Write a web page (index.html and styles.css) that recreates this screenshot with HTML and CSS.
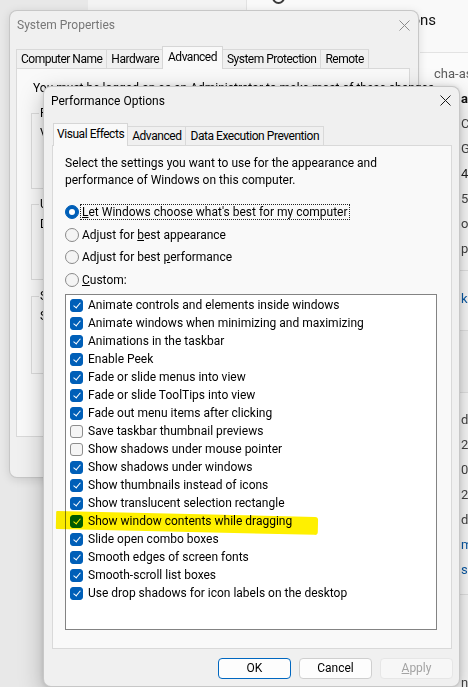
FILE: index.html
```html
<!DOCTYPE html>
<html lang="en">
<head>
<meta charset="utf-8">
<title>Performance Options</title>
<link rel="stylesheet" href="styles.css">
</head>
<body>
<div class="desktop">

  <!-- Settings app in the background -->
  <div class="settings">
    <div class="settings-rail"></div>
    <div class="settings-nav"></div>
    <div class="settings-main">
      <span class="search-ring"></span>
      <h1 class="settings-heading">Device specifications</h1>
      <div class="spec-card">
        <div class="spec-block top">
          <div class="spec-row device">cha-asus-laptop</div>
          <div class="spec-row"><b>about</b></div>
          <div class="spec-row">Copy</div>
          <div class="spec-row">GHz</div>
          <div class="spec-row dark">4 GB</div>
          <div class="spec-row">5A1F</div>
          <div class="spec-row">oint</div>
          <div class="spec-row">pen</div>
        </div>
        <div class="spec-block links">
          <div class="spec-row link">kg</div>
        </div>
        <div class="spec-block blank"></div>
        <div class="spec-block windows">
          <div class="spec-row">d</div>
          <div class="spec-row">22H2</div>
          <div class="spec-row">0/2023</div>
          <div class="spec-row">27</div>
          <div class="spec-row">d</div>
          <div class="spec-row link">m</div>
          <div class="spec-row link">se</div>
        </div>
        <div class="spec-block tail">
          <div class="spec-row">n</div>
        </div>
      </div>
    </div>
  </div>

  <!-- System Properties dialog -->
  <div class="window sysprops">
    <div class="titlebar">
      <span class="title">System Properties</span>
      <span class="close">
        <svg viewBox="0 0 11 11"><path d="M0.5 0.5 L10.5 10.5 M10.5 0.5 L0.5 10.5"/></svg>
      </span>
    </div>
    <div class="tabs">
      <span class="tab">Computer Name</span>
      <span class="tab">Hardware</span>
      <span class="tab active">Advanced</span>
      <span class="tab">System Protection</span>
      <span class="tab">Remote</span>
    </div>
    <div class="panel sp-panel">
      <p class="note">You must be logged on as an Administrator to make most of these changes.</p>
      <fieldset class="group g-perf">
        <legend>Performance</legend>
        <p>Visual effects, processor scheduling, memory usage, and virtual memory</p>
      </fieldset>
      <fieldset class="group g-profiles">
        <legend>User Profiles</legend>
        <p>Desktop settings related to your sign-in</p>
      </fieldset>
      <fieldset class="group g-startup">
        <legend>Startup and Recovery</legend>
        <p>System startup, system failure, and debugging information</p>
      </fieldset>
    </div>
  </div>

  <!-- Performance Options dialog -->
  <div class="window perf">
    <div class="titlebar">
      <span class="title">Performance Options</span>
      <span class="close">
        <svg viewBox="0 0 11 11"><path d="M0.5 0.5 L10.5 10.5 M10.5 0.5 L0.5 10.5"/></svg>
      </span>
    </div>
    <div class="tabs">
      <span class="tab active">Visual Effects</span>
      <span class="tab">Advanced</span>
      <span class="tab">Data Execution Prevention</span>
    </div>
    <div class="panel pf-panel">
      <p class="desc">Select the settings you want to use for the appearance and performance of Windows on this computer.</p>

      <div class="radios">
        <div class="radio-row"><span class="radio on"></span><span class="radio-label focus"><u>L</u>et Windows choose what's best for my computer</span></div>
        <div class="radio-row"><span class="radio"></span><span class="radio-label">Adjust for <u>b</u>est appearance</span></div>
        <div class="radio-row"><span class="radio"></span><span class="radio-label">Adjust for best <u>p</u>erformance</span></div>
        <div class="radio-row"><span class="radio"></span><span class="radio-label"><u>C</u>ustom:</span></div>
      </div>

      <div class="checklist">
        <div class="item"><span class="box on"></span>Animate controls and elements inside windows</div>
        <div class="item"><span class="box on"></span>Animate windows when minimizing and maximizing</div>
        <div class="item"><span class="box on"></span>Animations in the taskbar</div>
        <div class="item"><span class="box on"></span>Enable Peek</div>
        <div class="item"><span class="box on"></span>Fade or slide menus into view</div>
        <div class="item"><span class="box on"></span>Fade or slide ToolTips into view</div>
        <div class="item"><span class="box on"></span>Fade out menu items after clicking</div>
        <div class="item"><span class="box"></span>Save taskbar thumbnail previews</div>
        <div class="item"><span class="box"></span>Show shadows under mouse pointer</div>
        <div class="item"><span class="box on"></span>Show shadows under windows</div>
        <div class="item"><span class="box on"></span>Show thumbnails instead of icons</div>
        <div class="item"><span class="box on"></span>Show translucent selection rectangle</div>
        <div class="item"><span class="box on"></span>Show window contents while dragging</div>
        <div class="item"><span class="box on"></span>Slide open combo boxes</div>
        <div class="item"><span class="box on"></span>Smooth edges of screen fonts</div>
        <div class="item"><span class="box on"></span>Smooth-scroll list boxes</div>
        <div class="item"><span class="box on"></span>Use drop shadows for icon labels on the desktop</div>
      </div>
    </div>
    <div class="actions">
      <span class="button default">OK</span>
      <span class="button">Cancel</span>
      <span class="button disabled"><u>A</u>pply</span>
    </div>
  </div>

  <!-- marker stroke over one option -->
  <span class="marker"></span>
</div>
</body>
</html>
```

FILE: styles.css
```css
* { box-sizing: border-box; }

html, body {
  margin: 0;
  padding: 0;
}

body {
  width: 468px;
  height: 687px;
  overflow: hidden;
  background: #ebebeb;
  font-family: Roboto, "Noto Sans", sans-serif;
  font-size: 12px;
  color: #000;
}

p { margin: 0; }
u { text-decoration: underline; text-underline-offset: 1px; }

.desktop {
  position: relative;
  width: 468px;
  height: 687px;
  overflow: hidden;
}

/* ---------- background settings app ---------- */
.settings {
  position: absolute;
  inset: 0;
  display: flex;
}

.settings-rail {
  flex: none;
  width: 88px;
  background: #e8e8e8;
}

.settings-nav {
  flex: none;
  width: 158px;
  background: #f3f3f3;
}

.settings-main {
  flex: 1;
  position: relative;
  background: #f9f9f9;
  border-left: 1px solid #e2e2e2;
}

.search-ring {
  position: absolute;
  left: 25px;
  top: -9px;
  width: 13px;
  height: 13px;
  border: 2px solid #3a3a3a;
  border-radius: 50%;
}

.settings-heading {
  margin: 0;
  width: 189px;
  padding-top: 10px;
  font-size: 15px;
  font-weight: 400;
  line-height: 20px;
  text-align: right;
  white-space: nowrap;
  color: #111;
}

.spec-card {
  margin: 22px 0 0 173px;
  width: 260px;
  font-size: 13px;
  color: #444;
  white-space: nowrap;
}

.spec-block {
  border-top: 1px solid #e3e3e3;
  background: #fbfbfb;
}

.spec-block.top { padding: 8px 0 9px; }
.spec-block.links { padding: 15px 0 19px; }
.spec-block.blank { height: 62px; background: #f4f4f4; }
.spec-block.windows { padding: 14px 0 12px; }
.spec-block.tail { padding-top: 75px; background: #f9f9f9; }

.spec-row {
  height: 25px;
  line-height: 25px;
  padding-left: 41px;
}

.spec-row.device { padding-left: 14px; color: #5c5c5c; }
.spec-row b { color: #111; }
.spec-row.dark { color: #222; }
.spec-row.link { color: #0a5aa5; }

/* ---------- dialog chrome ---------- */
.window {
  position: absolute;
  display: flex;
  flex-direction: column;
  background: #f0f0f0;
  border: 1px solid rgba(0, 0, 0, 0.17);
  border-radius: 8px;
}

.sysprops {
  left: 9px;
  top: 10px;
  width: 410px;
  height: 468px;
  box-shadow: 0 2px 10px rgba(0, 0, 0, 0.12);
}

.perf {
  left: 43px;
  top: 86px;
  width: 417px;
  height: 601px;
  box-shadow: 0 8px 24px rgba(0, 0, 0, 0.26), 0 0 5px rgba(0, 0, 0, 0.12);
}

.titlebar {
  flex: none;
  display: flex;
  align-items: center;
  justify-content: space-between;
  padding-left: 7px;
}

.sysprops .titlebar { height: 28px; }
.perf .titlebar { height: 27px; }

.sysprops .title { color: #777; }

.close {
  width: 28px;
  height: 100%;
  display: flex;
  align-items: center;
  justify-content: center;
}

.close svg {
  width: 11px;
  height: 11px;
  fill: none;
  stroke: #1a1a1a;
  stroke-width: 1;
}

.sysprops .close svg { stroke: #8a8a8a; }

/* ---------- tabs ---------- */
.tabs {
  flex: none;
  display: flex;
  align-items: flex-end;
  position: relative;
  z-index: 1;
  height: 22px;
}

.sysprops .tabs { margin-top: 7px; padding-left: 6px; }
.perf .tabs { margin-top: 9px; padding-left: 10px; }

.tab {
  height: 19px;
  line-height: 18px;
  margin-right: -1px;
  border: 1px solid #d9d9d9;
  border-bottom: none;
  background: #f0f0f0;
  white-space: nowrap;
  letter-spacing: -0.45px;
}

.sysprops .tab { padding: 0 4px; letter-spacing: -0.5px; }
.perf .tab { padding: 0 4px; }

.tab.active {
  height: 23px;
  line-height: 20px;
  margin: 0 -1px -1px -1px;
  background: #f9f9f9;
  border-color: #d6d6d6;
  position: relative;
}

.sysprops .tab.active { padding: 0 5px; }
.perf .tab.active { padding: 0 3px; }

/* ---------- tab page ---------- */
.panel {
  background: #f9f9f9;
  border: 1px solid #d9d9d9;
}

.sp-panel {
  margin: 0 8px 0 6px;
  height: 369px;
  padding: 11px 14px 0;
}

.note {
  padding-left: 2px;
  line-height: 17px;
  white-space: nowrap;
}

.group {
  margin: 0;
  padding: 0 8px;
  border: 1px solid #dcdcdc;
  min-width: 0;
}

.group legend {
  padding: 0 1px;
  margin-left: -1px;
  line-height: 17px;
}

.group p {
  padding-top: 3px;
  line-height: 17px;
  white-space: nowrap;
}

.g-perf { height: 84px; margin-top: 8px; }
.g-profiles { height: 84px; margin-top: 7px; }
.g-startup { height: 86px; margin-top: 8px; }

.pf-panel {
  flex: none;
  margin: 0 7px 0 8px;
  height: 504px;
  padding: 9px 12px 0;
}

.desc {
  line-height: 17px;
  width: 330px;
}

.radios {
  margin-top: 12px;
}

.radio-row {
  height: 22.5px;
  display: flex;
  align-items: center;
}

.radio {
  flex: none;
  width: 14px;
  height: 14px;
  border-radius: 50%;
  border: 1px solid #8a8a8a;
  background: #f4f4f4;
  margin-right: 1px;
  display: flex;
  align-items: center;
  justify-content: center;
}

.radio.on {
  border-color: #005fb8;
  background: #005fb8;
}

.radio.on::after {
  content: "";
  width: 6px;
  height: 6px;
  border-radius: 50%;
  background: #fff;
}

.radio-label {
  padding: 0 1px;
  line-height: 14px;
  border: 1px dotted transparent;
}

.radio-label.focus {
  border-color: #222;
}

/* ---------- effects list ---------- */
.checklist {
  margin-top: 3px;
  width: 372px;
  height: 336px;
  border: 1px solid #838383;
  background: #fff;
  padding: 1px 0 0 4px;
}

.item {
  height: 18px;
  display: flex;
  align-items: center;
  gap: 5px;
  white-space: nowrap;
}

.box {
  flex: none;
  width: 13px;
  height: 13px;
  border-radius: 3px;
  border: 1px solid #8d8d8d;
  background: #f5f5f5;
  display: flex;
  align-items: center;
  justify-content: center;
}

.box.on {
  border-color: #005fb8;
  background: #005fb8;
}

.box.on::after {
  content: "";
  width: 3px;
  height: 6px;
  margin-top: -2px;
  border: solid #fff;
  border-width: 0 1.3px 1.3px 0;
  transform: rotate(40deg);
}

/* ---------- dialog buttons ---------- */
.actions {
  flex: none;
  display: flex;
  justify-content: flex-end;
  gap: 8px;
  padding: 9px 6px 0 0;
}

.button {
  width: 73px;
  height: 21px;
  line-height: 19px;
  text-align: center;
  border: 1px solid #cfcfcf;
  border-radius: 4px;
  background: #fdfdfd;
}

.button.default {
  border-color: #0067c0;
}

.button.disabled {
  color: #a3a3a3;
  background: #f7f7f7;
  border-color: #e6e6e6;
}

/* ---------- highlighter stroke ---------- */
.marker {
  position: absolute;
  left: 56px;
  top: 511px;
  width: 262px;
  height: 18px;
  background: #fff000;
  mix-blend-mode: multiply;
  transform: rotate(1.3deg);
  transform-origin: left center;
  border-radius: 1px 3px 3px 1px;
}
```
